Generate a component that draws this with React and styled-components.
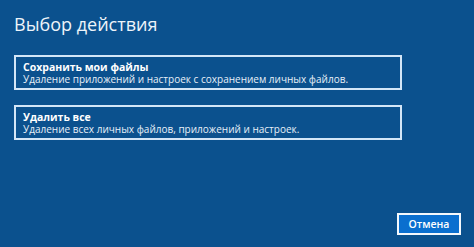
import React from "react";
import styled, { createGlobalStyle } from "styled-components";

const Global = createGlobalStyle`
  html, body { margin: 0; padding: 0; background: #0b518e; }
  body { font-family: "Open Sans", "Noto Sans", sans-serif; color: #fff; }
`;

const Page = styled.div`
  width: 474px;
  height: 247px;
  box-sizing: border-box;
  padding: 12px 13px 12px 14px;
  display: flex;
  flex-direction: column;
  background: #0b518e;
`;

const Title = styled.h1`
  margin: 0;
  font-size: 18px;
  font-weight: 400;
  line-height: 24px;
  color: #eef4fa;
`;

const Options = styled.div`
  margin-top: 19px;
  width: 388px;
  display: flex;
  flex-direction: column;
  gap: 15px;
`;

const Option = styled.button`
  box-sizing: border-box;
  height: 35px;
  padding: 2px 7px 0;
  border: 2px solid #d4e6f7;
  background: transparent;
  color: #fff;
  text-align: left;
  font-family: inherit;
  display: flex;
  flex-direction: column;
  justify-content: center;
`;

const OptionTitle = styled.span`
  font-size: 10.5px;
  font-weight: 700;
  line-height: 12px;
`;

const OptionDesc = styled.span`
  font-size: 10px;
  font-weight: 400;
  line-height: 13px;
  color: #e8f0f8;
`;

const Footer = styled.div`
  margin-top: auto;
  display: flex;
  justify-content: flex-end;
`;

const Button = styled.button`
  box-sizing: border-box;
  width: 64px;
  height: 22px;
  border: 2px solid #f4f8fc;
  background: #0a6fcf;
  color: #fff;
  font-family: inherit;
  font-size: 10.5px;
  font-weight: 600;
  padding: 0;
`;

export default function App() {
  return (
    <>
      <Global />
      <Page>
        <Title>Выбор действия</Title>
        <Options>
          <Option>
            <OptionTitle>Сохранить мои файлы</OptionTitle>
            <OptionDesc>Удаление приложений и настроек с сохранением личных файлов.</OptionDesc>
          </Option>
          <Option>
            <OptionTitle>Удалить все</OptionTitle>
            <OptionDesc>Удаление всех личных файлов, приложений и настроек.</OptionDesc>
          </Option>
        </Options>
        <Footer>
          <Button>Отмена</Button>
        </Footer>
      </Page>
    </>
  );
}
